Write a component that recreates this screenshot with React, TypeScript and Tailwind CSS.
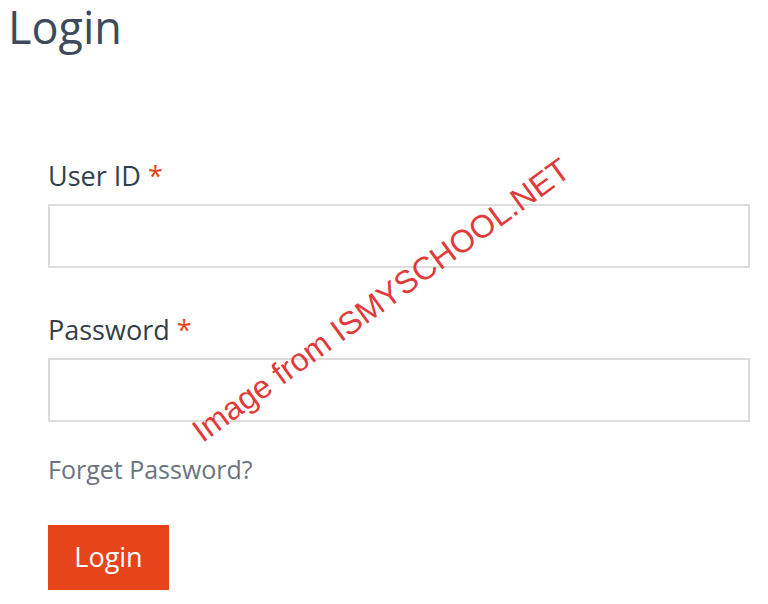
import React from 'react';

// login form with a rotated watermark over it
export default function App() {
  return (
    <div className="relative h-[604px] w-[768px] overflow-hidden bg-white font-['Open_Sans',sans-serif]">
      <h1 className="-mt-[4px] pl-[8px] text-[45px] leading-[62px] text-[#3e4a5a]">Login</h1>

      <form className="flex flex-col px-[48px] pt-[100px]" onSubmit={(e) => e.preventDefault()}>
        <label className="text-[27px] leading-[36px] text-[#333e4b]">
          User ID <span className="text-[#e4461d]">*</span>
        </label>
        <input className="mt-[10px] h-[64px] w-[702px] border-2 border-[#dcdcdc] outline-none" />

        <label className="mt-[44px] text-[27px] leading-[36px] text-[#333e4b]">
          Password <span className="text-[#e4461d]">*</span>
        </label>
        <input type="password" className="mt-[10px] h-[64px] w-[702px] border-2 border-[#dcdcdc] outline-none" />

        <a href="#" className="mt-[30px] text-[25px] leading-[34px] text-[#6b7480]">Forget Password?</a>

        <button className="mt-[39px] h-[65px] w-[121px] bg-[#e6441b] text-[27px] text-white">Login</button>
      </form>

      <div className="pointer-events-none absolute left-[381px] top-[300px] -translate-x-1/2 -translate-y-1/2 -rotate-[36deg] whitespace-nowrap font-['Liberation_Sans',Arial,sans-serif] text-[32px] leading-none text-[#e03a3a]">
        Image from ISMYSCHOOL.NET
      </div>
    </div>
  );
}
